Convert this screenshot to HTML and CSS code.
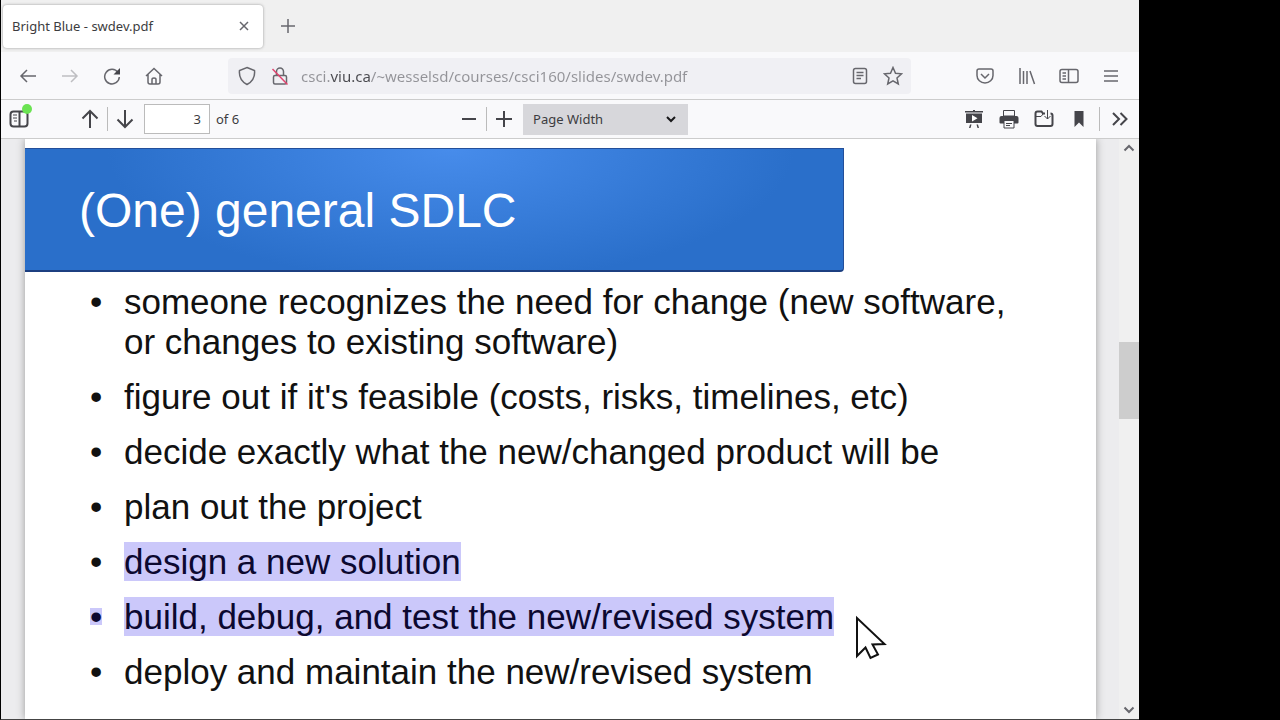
FILE: index.html
```
<!DOCTYPE html>
<html lang="en">
<head>
    <meta charset="UTF-8">
    <meta name="viewport" content="width=device-width, initial-scale=1.0">
    <title>Bright Blue - swdev.pdf</title>
    <link rel="stylesheet" href="styles.css">
</head>

<body>
    <div class="browser">
        <div class="tabs">
            <div class="tab">
                <span>Bright Blue - swdev.pdf</span>
                <button class="close" aria-label="Close tab">
                    <svg width="10" height="10" viewBox="0 0 10 10"><path d="M1 1l8 8M9 1L1 9"/></svg>
                </button>
            </div>
            <button class="newtab" aria-label="New tab">
                <svg width="14" height="14" viewBox="0 0 14 14"><path d="M7 0v14M0 7h14"/></svg>
            </button>
        </div>

        <div class="nav">
            <button aria-label="Back">
                <svg width="18" height="18" viewBox="0 0 18 18"><path d="M17 9H2M8 3L2 9l6 6"/></svg>
            </button>
            <button class="off" aria-label="Forward" disabled>
                <svg width="18" height="18" viewBox="0 0 18 18"><path d="M1 9h15M10 3l6 6-6 6"/></svg>
            </button>
            <button aria-label="Reload">
                <svg width="18" height="18" viewBox="0 0 18 18"><path d="M15 5.500A7.300 7.300 0 1 0 16.300 10"/><path class="fill" d="M17 1v6.500h-6.500z"/></svg>
            </button>
            <button aria-label="Home">
                <svg width="18" height="18" viewBox="0 0 18 18"><path d="M1 9l8-7.500L17 9M3 7.500V15q0 2 2 2h8q2 0 2-2V7.500M7 17v-4.500q0-1.500 2-1.500t2 1.500V17"/></svg>
            </button>
            <div class="address">
                <svg width="18" height="20" viewBox="0 0 18 20"><path d="M9 1.500l7.500 3Q17.500 14 9 18.500Q.500 14 1.500 4.500z"/></svg>
                <svg class="lock" width="18" height="20" viewBox="0 0 18 20"><path d="M4 9.500h10q1.500 0 1.500 1.500v5.500q0 1.500-1.500 1.500H4q-1.500 0-1.500-1.500V11q0-1.500 1.500-1.500zM5.500 9.500V5.500a3.500 3.500 0 0 1 7 0v4"/><path class="red" d="M1.500 3l15 15.500"/></svg>
                <input class="url" type="text" aria-label="Address" value="csci.viu.ca/~wesselsd/courses/csci160/slides/swdev.pdf">
                <button aria-label="Reader view">
                    <svg width="16" height="18" viewBox="0 0 16 18"><rect x="1.500" y="1.500" width="13" height="15" rx="2"/><path d="M4.500 5.500h7M4.500 8.500h7M4.500 11.500h4.500"/></svg>
                </button>
                <button aria-label="Bookmark this page">
                    <svg width="20" height="20" viewBox="0 0 20 20"><path d="M10 1.500l2.500 5.700 6.100.600-4.600 4.100 1.300 6.100L10 14.900 4.700 18 6 11.900 1.400 7.800l6.100-.600z"/></svg>
                </button>
            </div>
            <button aria-label="Save to Pocket">
                <svg width="18" height="18" viewBox="0 0 18 18"><path d="M3 2h12q2 0 2 2v4.500a8 7.500 0 0 1-16 0V4q0-2 2-2zM5 7l4 4 4-4"/></svg>
            </button>
            <button aria-label="Library">
                <svg width="18" height="18" viewBox="0 0 18 18"><path d="M2 1v16M5.500 4v13M9 4v13M12 4l4.500 13"/></svg>
            </button>
            <button aria-label="Sidebars">
                <svg width="20" height="18" viewBox="0 0 20 18"><rect x="1" y="2.500" width="18" height="13" rx="2"/><path d="M9.500 2.500v13M3.500 6h3.500M3.500 9h3.500M3.500 12h3.500"/></svg>
            </button>
            <button aria-label="Menu">
                <svg width="16" height="16" viewBox="0 0 16 16"><path d="M1 3h14M1 8h14M1 13h14"/></svg>
            </button>
        </div>

        <div class="toolbar">
            <div class="left">
                <button class="toggle" aria-label="Toggle sidebar">
                    <svg width="20" height="18" viewBox="0 0 20 18"><rect x="1.500" y="1.500" width="17" height="15" rx="3"/><path d="M10.500 1.500v15"/><path class="thin" d="M4 5h4M4 8h4M5 11h3"/></svg>
                    <span class="dot"></span>
                </button>
                <button aria-label="Previous page">
                    <svg width="18" height="20" viewBox="0 0 18 20"><path d="M9 19V2M1.500 9.500L9 2l7.500 7.500"/></svg>
                </button>
                <span class="line"></span>
                <button aria-label="Next page">
                    <svg width="18" height="20" viewBox="0 0 18 20"><path d="M9 1v17M1.500 10.500L9 18l7.500-7.500"/></svg>
                </button>
                <input class="pagenum" id="pagenum" type="text" value="3">
                <label for="pagenum">of 6</label>
            </div>
            <div class="middle">
                <button aria-label="Zoom out">
                    <svg width="16" height="16" viewBox="0 0 16 16"><path d="M1 8h14"/></svg>
                </button>
                <span class="line"></span>
                <button aria-label="Zoom in">
                    <svg width="16" height="16" viewBox="0 0 16 16"><path d="M0 8h16M8 0v16"/></svg>
                </button>
                <div class="zoom">
                    <select aria-label="Zoom">
                        <option>Page Width</option>
                        <option>Automatic Zoom</option>
                        <option>Actual Size</option>
                    </select>
                    <svg width="10" height="8" viewBox="0 0 10 8"><path d="M1 2l4 4 4-4"/></svg>
                </div>
            </div>
            <div class="right">
                <button aria-label="Presentation mode">
                    <svg width="18" height="20" viewBox="0 0 18 20"><path class="fill" d="M8 1h2v1h8v1.500H0V2h8zM1 4.500h16V14H1zM5 15.500h1.500l-1 3.500H4zM11.500 15.500H13l1 3.500h-1.500z"/><path class="white" d="M7 6l5.500 3.200L7 12.500z"/></svg>
                </button>
                <button aria-label="Print">
                    <svg width="20" height="20" viewBox="0 0 20 20"><path class="fill" d="M2.500 7h15q2 0 2 2v4.500q0 1-1 1h-17q-1 0-1-1V9q0-2 2-2z"/><path class="paper" d="M4.500 1.500h11V7h-11zM5 11.500h10V19H5z"/><path class="thin" d="M7 14.500h6M7 16.500h4"/></svg>
                </button>
                <button aria-label="Save">
                    <svg width="20" height="20" viewBox="0 0 20 20"><path d="M11 4.500H9L7.500 2.500h-4q-2 0-2 2V15q0 2 2 2h13q2 0 2-2V6.500q0-2-2-2"/><path class="thin" d="M2 7.500h5l2-2.500M13.500 1v9M10.500 7l3 3 3-3"/></svg>
                </button>
                <button aria-label="Current view">
                    <svg width="12" height="18" viewBox="0 0 12 18"><path class="fill" d="M1.500 1h9v16L6 12.500 1.500 17z"/></svg>
                </button>
                <span class="line"></span>
                <button aria-label="Tools">
                    <svg width="18" height="16" viewBox="0 0 18 16"><path d="M2 2l6 6-6 6M9.500 2l6 6-6 6"/></svg>
                </button>
            </div>
        </div>

        <div class="viewer">
            <div class="canvas">
                <div class="page">
                    <h1>(One) general SDLC</h1>
                    <ul>
                        <li><span class="bullet">•</span><p>someone recognizes the need for change (new software,<br>or changes to existing software)</p></li>
                        <li><span class="bullet">•</span><p>figure out if it's feasible (costs, risks, timelines, etc)</p></li>
                        <li><span class="bullet">•</span><p>decide exactly what the new/changed product will be</p></li>
                        <li><span class="bullet">•</span><p>plan out the project</p></li>
                        <li><span class="bullet">•</span><p><mark>design a new solution</mark></p></li>
                        <li><span class="bullet"><mark>•</mark></span><p><mark>build, debug, and test the new/revised system</mark></p></li>
                        <li><span class="bullet">•</span><p>deploy and maintain the new/revised system</p></li>
                    </ul>
                </div>
            </div>
            <div class="scrollbar">
                <button aria-label="Scroll up">
                    <svg width="12" height="8" viewBox="0 0 12 8"><path d="M1.500 6.500L6 2l4.500 4.500"/></svg>
                </button>
                <div class="track"><div class="thumb"></div></div>
                <button aria-label="Scroll down">
                    <svg width="12" height="8" viewBox="0 0 12 8"><path d="M1.500 1.500L6 6l4.500-4.500"/></svg>
                </button>
            </div>
            <svg class="cursor" width="32" height="46" viewBox="0 0 32 46"><path d="M2 4v38l8.500-8.500 5 10.500 7.500-3.500-5.500-10 12-.500z"/></svg>
        </div>
    </div>
</body>
</html>
```
FILE: styles.css
```
*{
    box-sizing: border-box;
}
body{
    margin: 0;
    background-color: black;
    font-family: "Noto Sans", sans-serif;
    font-size: 13px;
    color: #3c3c40;
}
button{
    display: flex;
    align-items: center;
    justify-content: center;
    flex-shrink: 0;
    padding: 0;
    border: none;
    background: none;
}
input, select{
    font-family: inherit;
    font-size: inherit;
    color: inherit;
}
svg{
    display: block;
    flex-shrink: 0;
    fill: none;
    stroke: #67676d;
    stroke-width: 1.5;
}
svg .fill{
    fill: #45454a;
    stroke: none;
}
.browser{
    width: 89vw;
    height: 100vh;
    display: flex;
    flex-direction: column;
    border-left: 1px solid black;
    border-bottom: 1px solid #444;
    background-color: #f9f9fb;
    overflow: hidden;
}

/* tabs */
.tabs{
    display: flex;
    align-items: center;
    height: 52px;
    padding-left: 2px;
    background-color: #f0f0f0;
}
.tab{
    display: flex;
    align-items: center;
    justify-content: space-between;
    width: 260px;
    height: 43px;
    padding: 0 9px;
    border-radius: 4px;
    background-color: white;
    box-shadow: 0 0 3px #999;
}
.close{
    width: 20px;
    height: 20px;
}
.newtab{
    width: 50px;
    height: 40px;
}

/* navigation */
.nav{
    display: flex;
    align-items: center;
    height: 48px;
    padding: 0 7px 0 6px;
    border-bottom: 1px solid #ccc;
}
.nav > button{
    width: 42px;
    height: 40px;
}
.off{
    opacity: 0.4;
}
.address{
    flex: 1;
    display: flex;
    align-items: center;
    height: 36px;
    margin: 0 53px;
    padding: 0 2px 0 10px;
    border-radius: 4px;
    background-color: #f0f0f4;
}
.lock{
    margin: 0 12px 0 15px;
}
.lock .red{
    stroke: #e0446f;
}
.address button{
    width: 33px;
    height: 32px;
}
/* the host name is drawn darker than the rest of the address */
.url{
    flex: 1;
    min-width: 0;
    padding: 0;
    border: none;
    font-size: 15px;
    color: #939398;
    background: linear-gradient(to right, #939398 29px, #4a4a4f 29px, #4a4a4f 69px, #939398 69px);
    -webkit-background-clip: text;
    background-clip: text;
    -webkit-text-fill-color: transparent;
}

/* pdf toolbar */
.toolbar{
    display: grid;
    grid-template-columns: 1fr auto 1fr;
    align-items: center;
    height: 39px;
    border-bottom: 1px solid #ccc;
}
.toolbar svg{
    stroke: #45454a;
    stroke-width: 2;
}
.toolbar svg .thin{
    stroke-width: 1;
}
.toolbar svg .white{
    fill: white;
    stroke: none;
}
.toolbar svg .paper{
    fill: #f9f9fb;
    stroke-width: 1;
}
.toolbar button{
    width: 34px;
    height: 32px;
}
.left, .middle, .right{
    display: flex;
    align-items: center;
}
.right{
    justify-content: flex-end;
    padding-right: 2px;
}
.right button{
    width: 35px;
}
.line{
    width: 1px;
    height: 24px;
    background-color: #bbb;
}
.right .line{
    margin: 0 2px 0 3px;
}
.toolbar .toggle{
    position: relative;
    width: 36px;
    margin-right: 36px;
}
.dot{
    position: absolute;
    top: 1px;
    left: 21px;
    width: 10px;
    height: 10px;
    border-radius: 50%;
    background-color: #6be352;
}
.pagenum{
    width: 66px;
    height: 30px;
    margin: 0 6px 0 2px;
    padding: 0 8px;
    border: 1px solid #bbb;
    background-color: white;
    text-align: right;
}
.zoom{
    display: grid;
    align-items: center;
    margin-left: 2px;
}
.zoom select, .zoom svg{
    grid-area: 1 / 1;
}
.zoom select{
    appearance: none;
    width: 165px;
    height: 31px;
    padding: 0 10px;
    border: none;
    background-color: #d7d7db;
}
.zoom svg{
    justify-self: end;
    margin-right: 12px;
    stroke: #18181a;
    pointer-events: none;
}

/* document */
.viewer{
    position: relative;
    flex: 1;
    display: flex;
    min-height: 0;
    background-color: #ececee;
}
.canvas{
    flex: 1;
    display: flex;
    padding: 0 23px 0 24px;
    overflow: hidden;
}
.page{
    flex: 1;
    padding-top: 9px;
    background-color: white;
    box-shadow: 0 0 8px #999;
    font-family: "Liberation Sans", Arial, sans-serif;
    color: #111;
}
h1{
    width: 76.5%;
    margin: 0;
    padding: 35px 54px 32px;
    border: 1px solid #234f9a;
    border-left: none;
    border-bottom: 2px solid #1c3f80;
    border-radius: 0 0 4px 0;
    background: radial-gradient(ellipse 42% 110% at 52% 0, #478ceb, #2a6fca);
    color: white;
    font-size: 48px;
    font-weight: normal;
    line-height: 54px;
}
ul{
    display: flex;
    flex-direction: column;
    gap: 15px;
    margin: 0;
    padding: 10px 0 0 65px;
    list-style: none;
    font-size: 35px;
    line-height: 40px;
}
li{
    display: flex;
    white-space: nowrap;
}
li p{
    margin: 0;
}
.bullet{
    width: 34px;
}
mark{
    background-color: #cbc8fa;
    color: #0c0830;
}
.bullet mark{
    display: inline-block;
    height: 17px;
    line-height: 17px;
}
.scrollbar{
    display: flex;
    flex-direction: column;
    width: 20px;
    background-color: #f0f0f0;
}
.scrollbar button{
    width: 20px;
    height: 18px;
}
.scrollbar svg{
    stroke-width: 2;
}
.track{
    flex: 1;
    padding-top: 185px;
}
.thumb{
    height: 77px;
    background-color: #cdcdcd;
}
.cursor{
    position: absolute;
    top: 475px;
    left: 854px;
}
.cursor path{
    fill: white;
    stroke: #111;
    stroke-width: 2;
}
```
